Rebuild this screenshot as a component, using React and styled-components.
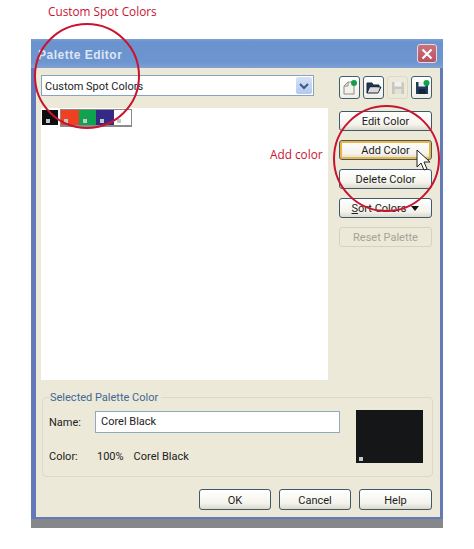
import React from 'react'
import styled, {createGlobalStyle} from 'styled-components'

const red = '#c8142f'
const face = '#ece9d8'
const uiFont = 'Roboto, "Liberation Sans", Arial, sans-serif'

const GlobalStyle = createGlobalStyle`
  html, body {
    margin: 0;
    padding: 0;
    background: #fff;
  }
`

const Page = styled.div`
  position: relative;
  width: 474px;
  height: 549px;
  overflow: hidden;
  padding-left: 31px;
  box-sizing: border-box;
  font-family: ${uiFont};
`

const Caption = styled.div`
  height: 39px;
  padding: 3px 0 0 17px;
  box-sizing: border-box;
  font-family: "Open Sans", sans-serif;
  font-size: 11.8px;
  line-height: 16px;
  color: ${red};
`

const AddCaption = styled.div`
  position: absolute;
  left: 270px;
  top: 146px;
  font-family: "Open Sans", sans-serif;
  font-size: 11.8px;
  line-height: 16px;
  color: ${red};
`

const Ring = styled.div`
  position: absolute;
  left: ${p => p.x}px;
  top: ${p => p.y}px;
  width: ${p => p.size}px;
  height: ${p => p.size}px;
  border: 2px solid ${red};
  border-radius: 50%;
  box-sizing: border-box;
`

const Dialog = styled.div`
  width: 412px;
  border-left: 5px solid #6279ba;
  border-right: 3px solid #6279ba;
  border-bottom: 2px solid #6279ba;
  box-sizing: border-box;
  box-shadow: 0 9px 0 #85878a;
  background: ${face};
`

const TitleBar = styled.div`
  height: 29px;
  margin: 0 -3px 0 -5px;
  padding: 2px 6px 0 7px;
  box-sizing: border-box;
  display: flex;
  align-items: center;
  justify-content: space-between;
  background: linear-gradient(#7d9fd6 0, #6a93cf 10%, #6d95cf 80%, #7fa2d4 100%);
`

const Title = styled.div`
  color: #dce6f5;
  font-family: "Liberation Sans", Arial, sans-serif;
  font-size: 12px;
  font-weight: bold;
  letter-spacing: 0.5px;
`

const CloseButton = styled.div`
  width: 20px;
  height: 19px;
  margin-top: -2px;
  border: 1px solid #e9d8dc;
  border-radius: 3px;
  box-sizing: border-box;
  background: linear-gradient(#c8737f, #b9525f);
  display: flex;
  align-items: center;
  justify-content: center;
`

const Body = styled.div`
  padding: 7px 8px 7px 5px;
`

const Main = styled.div`
  display: flex;
  gap: 11px;
`

const LeftColumn = styled.div`
  width: 287px;
  display: flex;
  flex-direction: column;
  gap: 12px;
`

const Select = styled.div`
  width: 273px;
  height: 21px;
  background: #fff;
  border: 1px solid #86a3c0;
  box-sizing: border-box;
  display: flex;
  align-items: center;
  justify-content: space-between;
  padding: 0 1px 0 3px;
  font-size: 11px;
  line-height: 19px;
  color: #222;
`

const SelectLabel = styled.span`
  padding-top: 1px;
`

const SelectArrow = styled.div`
  width: 16px;
  height: 17px;
  border-radius: 2px;
  background: linear-gradient(#d5e1f5, #b4c9ec);
  display: flex;
  align-items: center;
  justify-content: center;
`

const Preview = styled.div`
  height: 272px;
  background: #fff;
  padding: 1px 0 0 1px;
  box-sizing: border-box;
  display: flex;
  align-items: flex-start;
  gap: 2px;
`

const BlackChip = styled.div`
  position: relative;
  width: 16px;
  height: 15px;
  margin-top: 1px;
  background: #0f0f10;
`

const Strip = styled.div`
  display: flex;
  border: 1px solid #8b8b8b;
  border-top-width: 1px;
  border-bottom-width: 2px;
`

const Chip = styled.div`
  position: relative;
  width: 17.5px;
  height: 15px;
  background: ${p => p.color};
`

const ChipMark = styled.span`
  position: absolute;
  left: ${p => p.left || 4}px;
  bottom: 2px;
  width: 4px;
  height: 4px;
  background: #c4c8c8;
`

const RightColumn = styled.div`
  width: 93px;
  padding-top: 1px;
  display: flex;
  flex-direction: column;
  gap: 9px;
`

const IconRow = styled.div`
  height: 23px;
  margin-bottom: 3px;
  display: flex;
  justify-content: space-between;
`

const IconButton = styled.div`
  width: 21px;
  height: 23px;
  border: 1px solid ${p => (p.disabled ? '#dcd9c8' : '#3e5f70')};
  border-radius: 3px;
  box-sizing: border-box;
  background: ${p => (p.disabled ? face : 'linear-gradient(#fff, #f0efe6)')};
  display: flex;
  align-items: center;
  justify-content: center;
`

const Button = styled.div`
  height: ${p => p.height || 20}px;
  width: ${p => (p.width ? `${p.width}px` : 'auto')};
  padding-top: 1px;
  border: 1px solid ${p => (p.disabled ? '#d5d2c0' : '#3c5a6e')};
  border-radius: 3px;
  box-sizing: border-box;
  background: ${p => (p.disabled ? face : 'linear-gradient(#fff, #f4f3ec 70%, #dcd8ca)')};
  box-shadow: ${p => (p.active ? 'inset 0 0 0 2px #f0b43c' : 'none')};
  color: ${p => (p.disabled ? '#a6a497' : '#1c1c1c')};
  font-size: 11px;
  display: flex;
  align-items: center;
  justify-content: center;
  gap: 5px;
`

const Underlined = styled.span`
  text-decoration: underline;
`

const Caret = styled.span`
  width: 0;
  height: 0;
  border-left: 4px solid transparent;
  border-right: 4px solid transparent;
  border-top: 5px solid #111;
`

const Group = styled.div`
  position: relative;
  margin: 17px -1px 0 1px;
  height: 80px;
  border: 1px solid #dcd9c8;
  border-radius: 4px;
  box-sizing: border-box;
  padding: 13px 9px 0 6px;
  display: flex;
  justify-content: space-between;
`

const Legend = styled.div`
  position: absolute;
  left: 7px;
  top: -7px;
  padding-right: 3px;
  background: ${face};
  color: #3f6797;
  font-size: 11px;
  line-height: 14px;
`

const Fields = styled.div`
  display: flex;
  flex-direction: column;
  gap: 17px;
`

const FieldRow = styled.div`
  display: flex;
  align-items: center;
  font-size: 11px;
  color: #222;
`

const FieldLabel = styled.span`
  width: 46px;
`

const ColorValue = styled.span`
  margin-left: 2px;
  display: flex;
  gap: 10px;
`

const NameInput = styled.div`
  width: 245px;
  height: 22px;
  background: #fff;
  border: 1px solid #8eaac0;
  box-sizing: border-box;
  padding: 0 5px 2px;
  display: flex;
  align-items: center;
  font-size: 11px;
  color: #222;
`

const Swatch = styled.div`
  position: relative;
  width: 67px;
  height: 53px;
  margin-top: -1px;
  background: #151618;
`

const Footer = styled.div`
  display: flex;
  justify-content: flex-end;
  gap: 8px;
  margin-top: 12px;
`

const Cursor = styled.svg`
  position: absolute;
  left: 416px;
  top: 149px;
`

const Check = () => (
  <svg width="10" height="8" viewBox="0 0 10 8">
    <path d="M1 2l4 4 4-4" fill="none" stroke="#3a5a8c" strokeWidth="2" />
  </svg>
)

const CloseIcon = () => (
  <svg width="12" height="12" viewBox="0 0 12 12">
    <path d="M1.5 1.5l9 9M10.5 1.5l-9 9" stroke="#fff" strokeWidth="2.2" />
  </svg>
)

const NewIcon = () => (
  <svg width="16" height="17" viewBox="0 0 16 17">
    <path d="M2 7l4-4h6v12H2z" fill="#f2f1ea" stroke="#8d8d86" />
    <path d="M2 7h4V3" fill="none" stroke="#8d8d86" />
    <circle cx="12" cy="4" r="3" fill="#14a04a" />
  </svg>
)

const OpenIcon = () => (
  <svg width="16" height="15" viewBox="0 0 16 15">
    <path d="M1 13V3h5l1 2h6v2H4l-3 6h11l3-6h-2" fill="#1f3650" stroke="#14263a" />
    <path d="M4 7.5h10L12 12.5H2z" fill="#d9dadb" />
  </svg>
)

const SaveIcon = ({color, dark, dot}) => (
  <svg width="16" height="17" viewBox="0 0 16 17">
    <path d="M2 3h11l1 1v11H2z" fill={color} />
    <rect x="4.5" y="3" width="7" height="4.5" fill="#eef0f2" />
    <rect x="4.5" y="10" width="7" height="5" fill={dark} />
    {dot && <circle cx="12.5" cy="4" r="3" fill="#14a04a" />}
  </svg>
)

export default function App() {
  return (
    <Page>
      <GlobalStyle />
      <Caption>Custom Spot Colors</Caption>
      <Dialog>
        <TitleBar>
          <Title>Palette Editor</Title>
          <CloseButton>
            <CloseIcon />
          </CloseButton>
        </TitleBar>
        <Body>
          <Main>
            <LeftColumn>
              <Select>
                <SelectLabel>Custom Spot Colors</SelectLabel>
                <SelectArrow>
                  <Check />
                </SelectArrow>
              </Select>
              <Preview>
                <BlackChip>
                  <ChipMark />
                </BlackChip>
                <Strip>
                  <Chip color="#ef4121">
                    <ChipMark left={3} />
                  </Chip>
                  <Chip color="#0fa24f">
                    <ChipMark />
                  </Chip>
                  <Chip color="#342a86">
                    <ChipMark />
                  </Chip>
                  <Chip color="#fff">
                    <ChipMark left={3} />
                  </Chip>
                </Strip>
              </Preview>
            </LeftColumn>
            <RightColumn>
              <IconRow>
                <IconButton>
                  <NewIcon />
                </IconButton>
                <IconButton>
                  <OpenIcon />
                </IconButton>
                <IconButton disabled>
                  <SaveIcon color="#c9c8bf" dark="#e4e2d6" />
                </IconButton>
                <IconButton>
                  <SaveIcon color="#1f3a5c" dark="#14263a" dot />
                </IconButton>
              </IconRow>
              <Button>Edit Color</Button>
              <Button active>Add Color</Button>
              <Button>Delete Color</Button>
              <Button>
                <span>
                  <Underlined>S</Underlined>ort Colors
                </span>
                <Caret />
              </Button>
              <Button disabled>Reset Palette</Button>
            </RightColumn>
          </Main>
          <Group>
            <Legend>Selected Palette Color</Legend>
            <Fields>
              <FieldRow>
                <FieldLabel>Name:</FieldLabel>
                <NameInput>Corel Black</NameInput>
              </FieldRow>
              <FieldRow>
                <FieldLabel>Color:</FieldLabel>
                <ColorValue>
                  <span>100%</span>
                  <span>Corel Black</span>
                </ColorValue>
              </FieldRow>
            </Fields>
            <Swatch>
              <ChipMark left={3} />
            </Swatch>
          </Group>
          <Footer>
            <Button height={21} width={72}>OK</Button>
            <Button height={21} width={72}>Cancel</Button>
            <Button height={21} width={73}>Help</Button>
          </Footer>
        </Body>
      </Dialog>
      <AddCaption>Add color</AddCaption>
      <Ring x={34} y={23} size={106} />
      <Ring x={333} y={105} size={107} />
      <Cursor width="16" height="24" viewBox="0 0 16 24">
        <path d="M1 1v17l4-4 3 7 3-1-3-7h6z" fill="#fff" stroke="#222" strokeWidth="1" />
      </Cursor>
    </Page>
  )
}
